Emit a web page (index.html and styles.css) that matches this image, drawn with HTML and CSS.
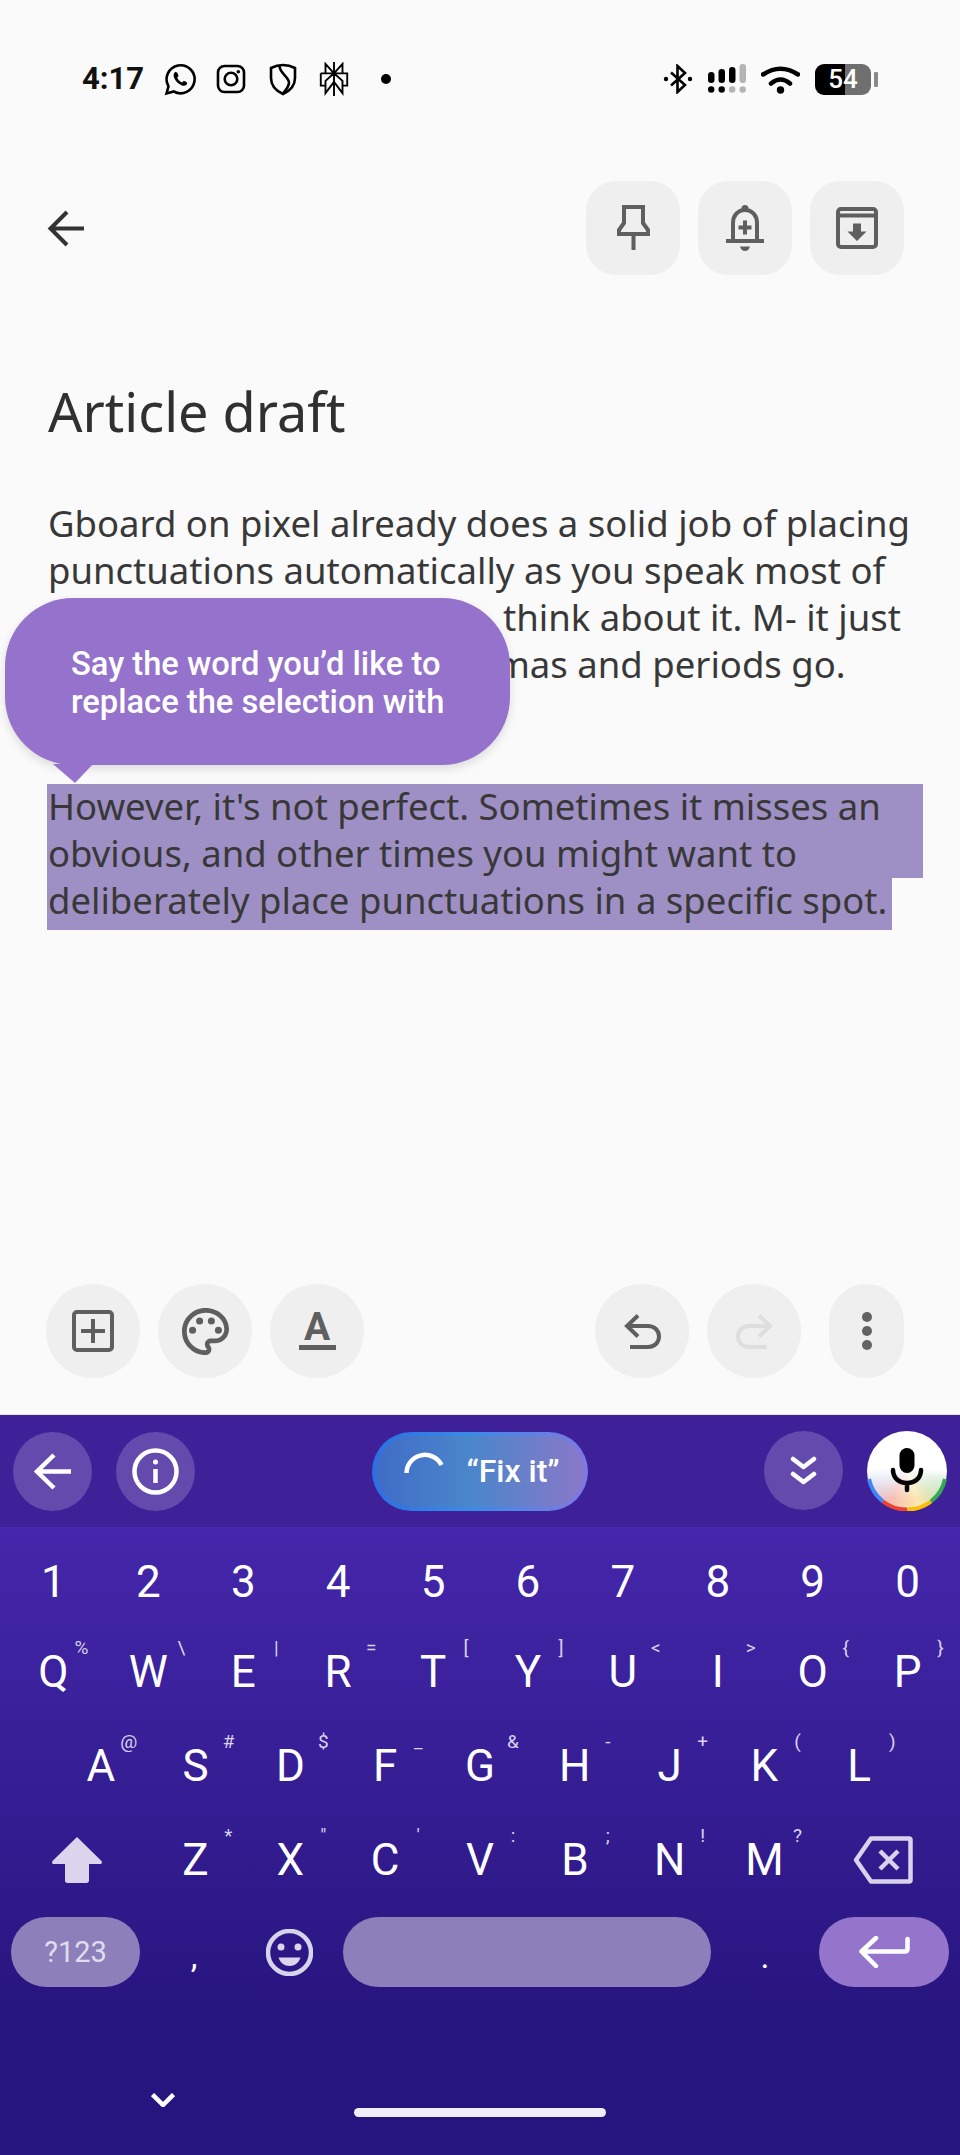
FILE: index.html
```html
<!DOCTYPE html>
<html lang="en">
<head>
  <meta charset="utf-8">
  <title>Article draft</title>
  <link rel="stylesheet" href="styles.css">
</head>
<body>
<main class="note">
  <div class="status">
    <div class="status-left">
      <span class="clock">4:17</span>
      <svg class="st-icon" viewBox="0 0 32 32"><path class="st-line" d="M2.5 30.5l2-7.2A14 14 0 1 1 9.800 28.500z"/><path d="M11.500 8.800c-1.700 1-2.500 3.200-1.400 6 1.500 3.600 4.200 6.300 7.800 7.600 2.500.9 4.500.1 5.300-1.600l-.3-1.500-3.100-1.500-1.500 1.700c-2.500-1-4.100-2.600-5.100-5l1.400-1.600-1.300-3.100z"/></svg>
      <svg class="st-icon" viewBox="0 0 32 32"><rect class="st-line" x="3" y="3" width="26" height="26" rx="6.500"/><circle class="st-line" cx="16" cy="16" r="6.300"/><circle cx="23.300" cy="8.700" r="1.800"/></svg>
      <svg class="st-icon" viewBox="0 0 32 32"><path class="st-line" d="M16 2c4 0 8.500 1.200 12 3v10c0 8-5.500 13-12 16C9.500 28 4 23 4 15V5c3.500-1.800 8-3 12-3z"/><path class="st-line" d="M12.500 3c0 7 9.500 11 9.500 16.500 0 4-3.500 8-6 11"/></svg>
      <svg class="st-icon" viewBox="0 0 32 36"><path class="st-thin" d="M16 0v36M7 2l9 10 9-10v10H7zM2 12h28v13h-5M2 12v13h5M16 21L7 33V20l9-8 9 8v13z"/></svg>
      <span class="st-dot"></span>
    </div>
    <div class="status-right">
      <svg class="st-bt" viewBox="0 0 30 30"><path class="st-line" d="M8 8.500l14 12.500-7.500 7V2l7.500 7L8 21.500"/><circle cx="3" cy="15" r="2.200"/><circle cx="27" cy="15" r="2.200"/></svg>
      <svg class="st-signal" viewBox="0 0 38 30">
        <rect x="0" y="8" width="6.500" height="11" rx="3.200"/><rect x="10.500" y="5" width="6.500" height="14" rx="3.200"/><rect x="21" y="3" width="6.500" height="16" rx="3.200"/><rect class="st-off" x="31.500" y="0" width="6.500" height="19" rx="3"/>
        <circle cx="3.200" cy="25.500" r="3.200"/><circle cx="13.700" cy="25.500" r="3.200"/><circle class="st-off" cx="24.200" cy="25.500" r="3.200"/><circle class="st-off" cx="34.700" cy="25.500" r="3.200"/>
      </svg>
      <svg class="st-wifi" viewBox="0 0 39 30"><path d="M2 10.500Q19.500-1 37 10.500M10 19.500Q19.500 11.500 29 19.500"/><circle cx="19.500" cy="26" r="3.700"/></svg>
      <span class="battery">54</span>
    </div>
  </div>

  <div class="top-bar">
    <svg class="back" viewBox="0 0 37 37"><path d="M37 18.500H4M20 2L3.500 18.500 20 35"/></svg>
    <div class="top-actions">
      <button class="square-btn"><svg width="33" height="46" viewBox="0 0 33 46"><path class="ic" d="M7 2h19v16l5 7v4H2v-4l5-7zM16.500 29v16"/></svg></button>
      <button class="square-btn"><svg width="38" height="46" viewBox="0 0 38 46"><path class="ic" d="M7 35V18C7 10.500 12 5 19 5s12 5.500 12 13v17M0 36h38M19 15.500v14M12.500 22.500h13"/><circle class="ic-fill" cx="19" cy="3.500" r="3.500"/><path class="ic-fill" d="M14 41.500h10c-.5 2.500-2.500 4.500-5 4.500s-4.500-2-5-4.500z"/></svg></button>
      <button class="square-btn"><svg width="42" height="42" viewBox="0 0 42 42"><rect class="ic" x="2" y="2" width="38" height="38" rx="3"/><path class="ic" d="M2 8.500h38"/><path class="ic-fill" d="M17 16.500h8v8h5.500L21 34l-9.500-9.500H17z"/></svg></button>
    </div>
  </div>

  <h1 class="title">Article draft</h1>

  <div class="note-text">
    <div class="line">Gboard on pixel already does a solid job of placing</div>
    <div class="line">punctuations automatically as you speak most of</div>
    <div class="line line-third">think about it. M- it just</div>
    <div class="line line-fourth">commas and periods go.</div>
    <div class="selected">
      <div class="line sel-line">However, it's not perfect. Sometimes it misses an</div>
      <div class="line sel-line">obvious, and other times you might want to</div>
      <div class="line sel-line sel-last">deliberately place punctuations in a specific spot.</div>
    </div>
  </div>

  <div class="bubble">
    <p>Say the word you’d like to<br>replace the selection with</p>
  </div>

  <div class="note-tools">
    <div class="tool-group">
      <button class="round-btn"><svg width="42" height="42" viewBox="0 0 42 42"><rect class="ic" x="2" y="2" width="38" height="38" rx="3"/><path class="ic" d="M9 21h24M21 9v24"/></svg></button>
      <button class="round-btn"><svg width="47" height="47" viewBox="2 2 20 20"><path class="ic-fill" d="M12 22C6.490 22 2 17.510 2 12S6.490 2 12 2s10 4.040 10 9c0 3.310-2.690 6-6 6h-1.770c-.28 0-.5.22-.5.5 0 .12.05.23.13.33.41.47.64 1.060.64 1.670 0 1.380-1.120 2.500-2.500 2.500zm0-18c-4.410 0-8 3.590-8 8s3.590 8 8 8c.28 0 .5-.22.5-.5 0-.16-.08-.28-.14-.35-.41-.46-.63-1.050-.63-1.650 0-1.380 1.120-2.500 2.500-2.500H16c2.210 0 4-1.790 4-4 0-3.860-3.590-7-8-7z"/><circle class="ic-fill" cx="6.500" cy="11.500" r="1.500"/><circle class="ic-fill" cx="9.500" cy="7.500" r="1.500"/><circle class="ic-fill" cx="14.500" cy="7.500" r="1.500"/><circle class="ic-fill" cx="17.500" cy="11.500" r="1.500"/></svg></button>
      <button class="round-btn"><span class="format-a">A</span></button>
    </div>
    <div class="tool-group">
      <button class="round-btn"><svg width="37" height="35" viewBox="0 0 37 35"><path class="ic" d="M14 1.500L3 12l11 10.500M3 12h21c6.500 0 11 4.500 11 10.500S30.500 33 24 33H6"/></svg></button>
      <button class="round-btn"><svg width="37" height="35" viewBox="0 0 37 35"><path class="ic-off" d="M23 1.500L34 12 23 22.500M34 12H13C6.500 12 2 16.500 2 22.500S6.500 33 13 33h18"/></svg></button>
      <button class="round-btn more-btn"><span class="more-dot"></span><span class="more-dot"></span><span class="more-dot"></span></button>
    </div>
  </div>
</main>

<section class="keyboard">
  <div class="kb-bar">
    <div class="bar-group">
      <button class="bar-btn"><svg width="37" height="37" viewBox="0 0 37 37"><path class="ic-white" d="M37 18.500H4M20 2L3 18.500 20 35"/></svg></button>
      <button class="bar-btn"><svg width="47" height="47" viewBox="0 0 47 47"><circle class="ic-white" cx="23.500" cy="23.500" r="21"/><path class="ic-white" d="M23.500 21v14"/><circle cx="23.500" cy="14" r="2.500" fill="#fff"/></svg></button>
    </div>
    <div class="fix-pill">
      <svg width="42" height="42" viewBox="0 0 42 42"><path class="ic-white" d="M2.500 23A18.500 18.500 0 0 1 37.500 15"/></svg>
      <span>“Fix it”</span>
    </div>
    <div class="bar-group">
      <button class="bar-btn"><svg width="27" height="30" viewBox="0 0 27 30"><path class="ic-white round" d="M3 3l10.500 8L24 3M3 18l10.500 8L24 18"/></svg></button>
      <div class="mic">
        <svg width="80" height="80" viewBox="0 0 80 80">
          <path class="ring" stroke="#4285f4" d="M2 48A38.500 38.500 0 0 0 16 70.500"/>
          <path class="ring" stroke="#ea4335" d="M16 70.500A38.500 38.500 0 0 0 40 78.500"/>
          <path class="ring" stroke="#fbbc04" d="M40 78.500A38.500 38.500 0 0 0 64 70.500"/>
          <path class="ring" stroke="#34a853" d="M64 70.500A38.500 38.500 0 0 0 78 48"/>
          <rect x="32.500" y="17" width="15" height="25" rx="7.500"/>
          <path class="mic-arm" d="M26 39c0 8 6 13 14 13s14-5 14-13M40 52v7"/>
        </svg>
      </div>
    </div>
  </div>

  <div class="keys">
    <div class="row row-num">
      <div class="key">1</div><div class="key">2</div><div class="key">3</div><div class="key">4</div><div class="key">5</div><div class="key">6</div><div class="key">7</div><div class="key">8</div><div class="key">9</div><div class="key">0</div>
    </div>
    <div class="row row-top">
      <div class="key">Q<span class="hint hint-near">%</span></div><div class="key">W<span class="hint">\</span></div><div class="key">E<span class="hint">|</span></div><div class="key">R<span class="hint">=</span></div><div class="key">T<span class="hint">[</span></div><div class="key">Y<span class="hint">]</span></div><div class="key">U<span class="hint">&lt;</span></div><div class="key">I<span class="hint">&gt;</span></div><div class="key">O<span class="hint">{</span></div><div class="key">P<span class="hint">}</span></div>
    </div>
    <div class="row row-mid">
      <div class="key">A<span class="hint hint-near">@</span></div><div class="key">S<span class="hint">#</span></div><div class="key">D<span class="hint">$</span></div><div class="key">F<span class="hint">_</span></div><div class="key">G<span class="hint">&amp;</span></div><div class="key">H<span class="hint">-</span></div><div class="key">J<span class="hint">+</span></div><div class="key">K<span class="hint">(</span></div><div class="key">L<span class="hint">)</span></div>
    </div>
    <div class="row row-low">
      <div class="key"><svg width="50" height="46" viewBox="0 0 50 46"><path class="ic-soft" d="M25 0l24.500 24c.8.900.3 3-1 3H37v16.500c0 1.400-1 2.500-2.500 2.500h-19c-1.500 0-2.500-1.100-2.500-2.500V27H1.500c-1.300 0-1.800-2.100-1-3z"/></svg></div>
      <div class="key">Z<span class="hint">*</span></div><div class="key">X<span class="hint">"</span></div><div class="key">C<span class="hint">'</span></div><div class="key">V<span class="hint">:</span></div><div class="key">B<span class="hint">;</span></div><div class="key">N<span class="hint">!</span></div><div class="key">M<span class="hint">?</span></div>
      <div class="key"><svg width="60" height="48" viewBox="0 0 60 48"><path class="ic-soft-line" d="M18 2.500h38c1 0 1.500.5 1.500 1.500v40c0 1-.5 1.500-1.500 1.500H18L3 24zM27 15l18 18M45 15L27 33"/></svg></div>
    </div>
    <div class="row row-bottom">
      <button class="pill pill-sym">?123</button>
      <div class="key key-punct">,</div>
      <div class="key"><svg width="47" height="47" viewBox="0 0 47 47"><circle class="ic-soft-line" cx="23.500" cy="23.500" r="21.500"/><circle class="ic-soft" cx="15" cy="18" r="3.500"/><circle class="ic-soft" cx="32" cy="18" r="3.500"/><path class="ic-soft" d="M12.500 28.500h22c-1.500 5-6 8.500-11 8.500s-9.500-3.500-11-8.500z"/></svg></div>
      <button class="pill pill-space"></button>
      <div class="key key-punct">.</div>
      <button class="pill pill-enter"><svg width="52" height="32" viewBox="0 0 52 32"><path class="ic-white round" d="M49.500 3v10c0 1.500-1 2.500-2.500 2.500H4M18 2L3.500 15.500 18 30"/></svg></button>
    </div>
  </div>

  <div class="nav">
    <svg class="nav-chevron" width="24" height="14" viewBox="0 0 24 14"><path class="ic-white" d="M1.500 1.500L12 12 22.500 1.500"/></svg>
    <span class="home-bar"></span>
  </div>
</section>
</body>
</html>
```

FILE: styles.css
```css
* {
  box-sizing: border-box;
}
body {
  margin: 0;
  width: 960px;
  height: 2155px;
  overflow: hidden;
  position: relative;
  font-family: 'Roboto', sans-serif;
  background-color: #fafafa;
}
button {
  border: none;
  padding: 0;
  font-family: inherit;
}
svg {
  display: block;
}

/* note area */
.note {
  height: 1415px;
  display: flex;
  flex-direction: column;
  background-color: #fafafa;
  border-bottom: 1px solid #e6e6e6;
}
.status {
  display: flex;
  justify-content: space-between;
  align-items: center;
  height: 36px;
  margin-top: 61px;
  padding: 0 80px 0 82px;
}
.status-left,
.status-right {
  display: flex;
  align-items: center;
}
.status-left {
  gap: 19.5px;
}
.status-right {
  gap: 15px;
}
.clock {
  font-size: 31px;
  font-weight: 700;
  line-height: 36px;
  color: #111;
  width: 62px;
}
.st-icon {
  width: 32px;
  height: 34px;
  fill: #000;
}
.st-line {
  fill: none;
  stroke: #000;
  stroke-width: 2.600;
}
.st-thin {
  fill: none;
  stroke: #000;
  stroke-width: 2;
}
.st-dot {
  width: 10px;
  height: 10px;
  margin-left: 11px;
  border-radius: 50%;
  background-color: #000;
}
.st-bt {
  width: 30px;
  height: 30px;
  fill: #000;
}
.st-signal {
  width: 38px;
  height: 30px;
  fill: #000;
}
.st-off {
  fill: #b4b4b4;
}
.st-wifi {
  width: 39px;
  height: 30px;
}
.st-wifi path {
  fill: none;
  stroke: #000;
  stroke-width: 4.500;
  stroke-linecap: round;
}
.battery {
  position: relative;
  width: 56px;
  height: 31px;
  margin-right: 9px;
  border-radius: 9px;
  background: linear-gradient(90deg, #000 54%, #6f6f6f 54%);
  color: #fff;
  font-size: 26px;
  font-weight: 500;
  line-height: 31px;
  text-align: center;
}
.battery::after {
  content: "";
  position: absolute;
  right: -7px;
  top: 8px;
  width: 4px;
  height: 15px;
  border-radius: 1px;
  background-color: #8a8a8a;
}
.top-bar {
  display: flex;
  justify-content: space-between;
  align-items: center;
  margin-top: 84px;
  padding: 0 56px 0 47px;
}
.back {
  width: 37px;
  height: 37px;
}
.back path {
  fill: none;
  stroke: #333;
  stroke-width: 4;
}
.top-actions {
  display: flex;
  gap: 18px;
}
.square-btn {
  display: flex;
  align-items: center;
  justify-content: center;
  width: 94px;
  height: 94px;
  border-radius: 30px;
  background-color: #efefef;
}
.ic {
  fill: none;
  stroke: #5f5f5f;
  stroke-width: 4;
}
.ic-fill {
  fill: #5f5f5f;
}
.ic-off {
  fill: none;
  stroke: #dedede;
  stroke-width: 4;
}
.title {
  margin: 106px 0 0 48px;
  font-family: 'Noto Sans', sans-serif;
  font-size: 54px;
  font-weight: 400;
  line-height: 60px;
  color: #303030;
}
.note-text {
  margin-top: 59px;
  font-family: 'Noto Sans', sans-serif;
  font-size: 36.500px;
  font-weight: 400;
  line-height: 47px;
  color: #383838;
}
.line {
  height: 47px;
  padding-left: 48px;
  white-space: nowrap;
}
.line-third {
  padding-left: 503px;
}
.line-fourth {
  padding-left: 422px;
}
.selected {
  margin-top: 96px;
  margin-left: 47px;
}
.sel-line {
  width: 876px;
  padding-left: 1px;
  line-height: 45px;
  background-color: #9e90c5;
}
.sel-last {
  height: 52px;
  width: 845px;
}
.bubble {
  position: absolute;
  left: 5px;
  top: 598px;
  width: 505px;
  height: 167px;
  display: flex;
  align-items: center;
  padding: 3px 0 0 66px;
  border-radius: 68px;
  background-color: #9572cb;
  box-shadow: 0 4px 10px rgba(0, 0, 0, 0.12);
}
.bubble::after {
  content: "";
  position: absolute;
  left: 48px;
  top: 166px;
  width: 40px;
  height: 19px;
  background-color: #9572cb;
  clip-path: polygon(0 0, 100% 0, 55% 100%);
}
.bubble p {
  margin: 0;
  color: #fff;
  font-size: 32.700px;
  font-weight: 500;
  line-height: 38px;
}
.note-tools {
  display: flex;
  justify-content: space-between;
  margin-top: auto;
  padding: 0 56px 36px 46px;
}
.tool-group {
  display: flex;
  gap: 18px;
}
.round-btn {
  display: flex;
  flex-direction: column;
  align-items: center;
  justify-content: center;
  width: 94px;
  height: 94px;
  border-radius: 47px;
  background-color: #efefef;
}
.more-btn {
  width: 75px;
  margin-left: 10px;
  gap: 4px;
}
.more-dot {
  width: 10px;
  height: 10px;
  border-radius: 50%;
  background-color: #636363;
}
.format-a {
  width: 37px;
  font-size: 39px;
  font-weight: 700;
  line-height: 31px;
  text-align: center;
  color: #5f5f5f;
  border-bottom: 5px solid #5f5f5f;
  padding-bottom: 2px;
}

/* keyboard */
.keyboard {
  height: 740px;
  background: linear-gradient(180deg, #4527ab 112px, #27157f 600px);
}
.kb-bar {
  display: flex;
  justify-content: space-between;
  align-items: center;
  height: 112px;
  padding: 0 13px 0;
  background-color: #3e2198;
}
.bar-group {
  display: flex;
  gap: 24px;
}
.bar-btn {
  display: flex;
  align-items: center;
  justify-content: center;
  width: 79px;
  height: 79px;
  border-radius: 50%;
  background-color: #644aac;
}
.ic-white {
  fill: none;
  stroke: #fff;
  stroke-width: 4.500;
}
.round {
  stroke-linecap: round;
  stroke-linejoin: round;
}
.fix-pill {
  display: flex;
  align-items: center;
  gap: 21px;
  width: 216px;
  height: 79px;
  padding: 0 0 0 28px;
  border: 4px solid transparent;
  border-radius: 40px;
  background:
    linear-gradient(90deg, #3f6cc6, #4a86cb 45%, #8a78c8) padding-box,
    linear-gradient(90deg, #2c6fe2, #3b8ae6 45%, #8078e2) border-box;
  color: #fff;
  font-size: 32px;
  font-weight: 500;
}
.mic {
  width: 80px;
  height: 80px;
  border-radius: 50%;
  background:
    linear-gradient(180deg, #fff 46%, rgba(255, 255, 255, 0) 85%),
    conic-gradient(from 100deg, #a6d6b0, #fbe7ad 60deg, #f6bdb6 110deg, #b8d2fb 170deg, #fff 190deg, #fff 340deg, #a6d6b0);
}
.ring {
  fill: none;
  stroke-width: 4;
}
.mic-arm {
  fill: none;
  stroke: #000;
  stroke-width: 4.500;
  stroke-linecap: round;
}
.keys {
  padding-top: 11px;
}
.row {
  display: grid;
  height: 94px;
  color: #fff;
  font-size: 44px;
}
.row-num {
  height: 87px;
  grid-template-columns: repeat(10, 1fr);
  padding: 0 5px 0 6px;
}
.row-top {
  grid-template-columns: repeat(10, 1fr);
  padding: 0 5px 0 6px;
}
.row-mid {
  grid-template-columns: repeat(9, 1fr);
  padding: 0 53.400px;
}
.row-low {
  grid-template-columns: 142px repeat(7, 1fr) 142px;
  padding: 0 6px;
}
.row-bottom {
  height: 90px;
  grid-template-columns: 129px 108px 82px 381px 108px 130px;
  padding-left: 11px;
  align-items: center;
}
.key {
  position: relative;
  display: flex;
  align-items: center;
  justify-content: center;
}
.hint {
  position: absolute;
  left: calc(50% + 33px);
  top: calc(50% - 25px);
  transform: translate(-50%, -50%);
  color: #d8d3ec;
  font-size: 19px;
  line-height: 1;
}
.hint-near {
  left: calc(50% + 28px);
}
.key-punct {
  height: 70px;
  padding-top: 8px;
  font-size: 34px;
}
.ic-soft {
  fill: #dad5ec;
}
.ic-soft-line {
  fill: none;
  stroke: #d8d3ec;
  stroke-width: 4.500;
  stroke-linejoin: round;
}
.pill {
  display: flex;
  align-items: center;
  justify-content: center;
  height: 70px;
  border-radius: 35px;
  background-color: #8d80ba;
}
.pill-sym {
  color: #e0dcf0;
  font-size: 29px;
}
.pill-space {
  margin-left: 13px;
}
.pill-enter {
  background-color: #9575cc;
}
.nav {
  display: flex;
  align-items: flex-start;
}
.nav-chevron {
  margin: 96px 0 0 151px;
}
.home-bar {
  width: 252px;
  height: 9px;
  margin: 111px 0 0 179px;
  border-radius: 5px;
  background-color: #f0eef7;
}
```
